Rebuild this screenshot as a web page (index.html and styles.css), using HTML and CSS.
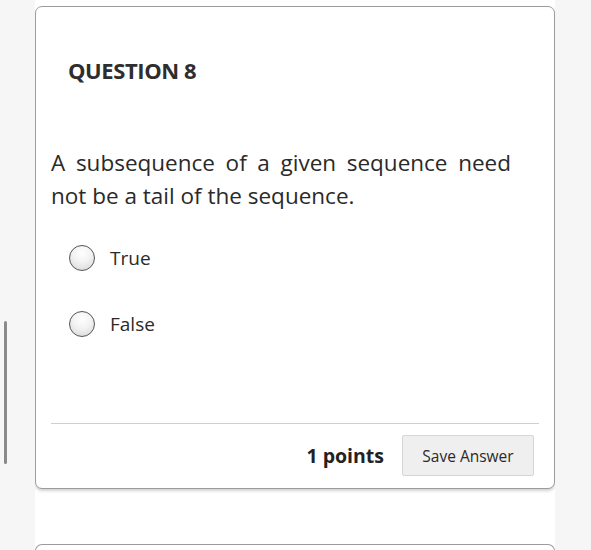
FILE: index.html
```html
<!DOCTYPE html>
<html>
<head>
<meta charset="utf-8">
<link rel="stylesheet" href="styles.css">
</head>
<body>
<div class="scrollbar"></div>
<main class="column">
  <section class="card">
    <h2 class="q-title">QUESTION 8</h2>
    <p class="q-text">A subsequence of a given sequence need not be a tail of the sequence.</p>
    <div class="options">
      <label class="option"><span class="radio"></span><span class="opt-label">True</span></label>
      <label class="option"><span class="radio"></span><span class="opt-label">False</span></label>
    </div>
    <div class="divider"></div>
    <div class="footer">
      <span class="points">1 points</span>
      <button class="save">Save Answer</button>
    </div>
  </section>
  <section class="card next"></section>
</main>
</body>
</html>
```

FILE: styles.css
```css
html, body {
  margin: 0;
  padding: 0;
}
body {
  background: #f6f6f6;
  font-family: "Open Sans", "Liberation Sans", sans-serif;
  color: #2b2b2b;
  height: 550px;
  overflow: hidden;
  position: relative;
}
.scrollbar {
  position: absolute;
  left: 4px;
  top: 321px;
  width: 3px;
  height: 143px;
  background: #8a8a8a;
  border-radius: 2px;
}
.column {
  margin-left: 35px;
  width: 520px;
  background: #ffffff;
  padding-top: 6px;
  height: 544px;
  overflow: hidden;
}
.card {
  border: 1px solid #9c9c9c;
  border-radius: 7px;
  box-shadow: 0 2px 3px rgba(0,0,0,0.18);
  padding: 48px 15px 12px 15px;
  background: #fff;
}
.q-title {
  margin: 0 0 0 17px;
  font-size: 22px;
  line-height: 30px;
  font-weight: 700;
  color: #2e2e2e;
  letter-spacing: -0.4px;
}
.q-text {
  margin: 61px 0 0 0;
  font-size: 22.5px;
  line-height: 33px;
  text-align: justify;
  color: #2a2a2a;
  padding-right: 28px;
}
.options {
  margin-top: 32px;
  display: flex;
  flex-direction: column;
  gap: 39px;
  padding-left: 18px;
}
.option {
  display: flex;
  align-items: center;
  height: 27px;
  gap: 15px;
}
.radio {
  width: 24px;
  height: 24px;
  border: 1.5px solid #555;
  border-radius: 50%;
  background: radial-gradient(circle at 50% 30%, #ffffff 0%, #f2f2f2 45%, #d4d4d4 100%);
  flex: none;
}
.opt-label {
  font-size: 19px;
  color: #2a2a2a;
}
.divider {
  margin-top: 86px;
  height: 1px;
  background: #cfcfcf;
}
.footer {
  margin-top: 11px;
  display: flex;
  justify-content: flex-end;
  align-items: center;
  gap: 18px;
  padding-right: 5px;
}
.points {
  font-size: 19.5px;
  font-weight: 700;
  color: #222;
}
.save {
  width: 132px;
  height: 41px;
  background: #efefef;
  border: 1px solid #d6d6d6;
  border-radius: 2px;
  font-family: "Open Sans", "Liberation Sans", sans-serif;
  font-size: 15.5px;
  color: #2a2a2a;
  padding: 0;
}
.card.next {
  margin-top: 55px;
  height: 40px;
  padding: 0;
  border-bottom: none;
  box-shadow: none;
  border-radius: 7px 7px 0 0;
}
```
